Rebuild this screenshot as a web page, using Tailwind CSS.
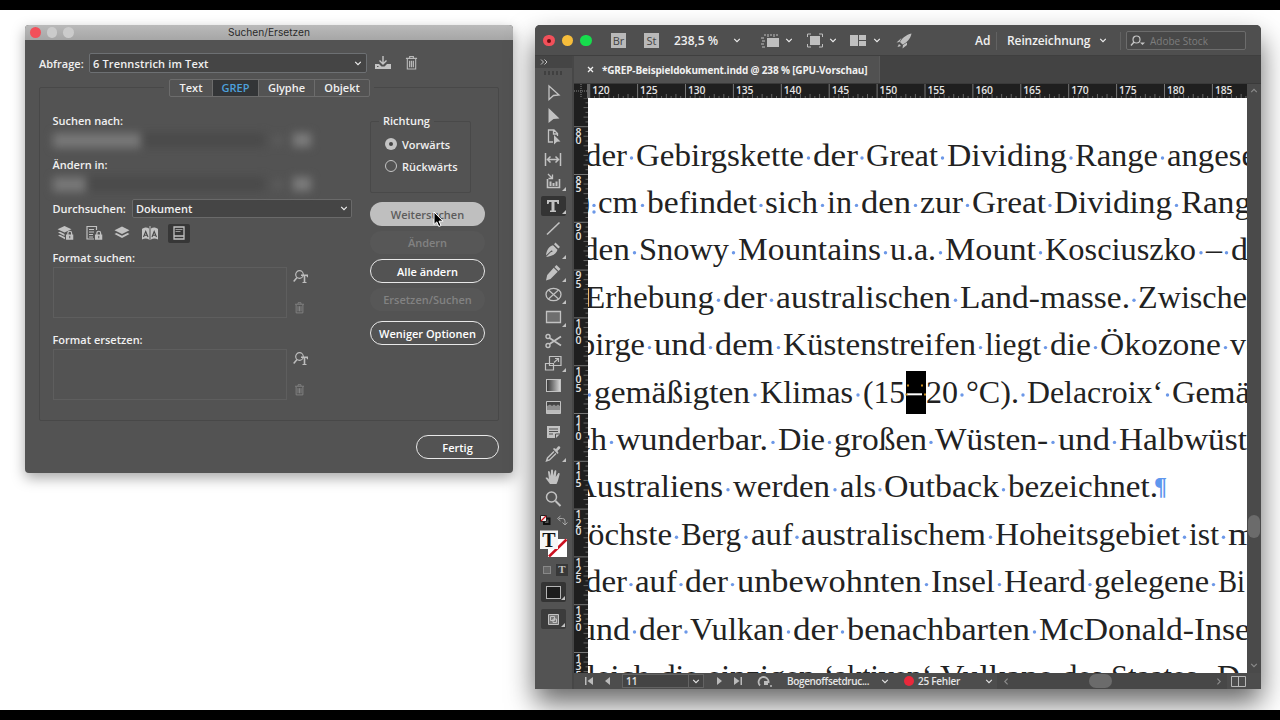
<!DOCTYPE html>
<html lang="de">

<head>
    <meta charset="UTF-8">
    <meta name="viewport" content="width=device-width, initial-scale=1.0">
    <title>Suchen/Ersetzen</title>
    <script src="https://cdn.jsdelivr.net/npm/@tailwindcss/browser@4"></script>
</head>

<body class="relative w-[1280px] h-[720px] overflow-hidden bg-white font-['Open_Sans',sans-serif] text-[11px] leading-none font-semibold text-[#f0f0f0]">

    <!-- Symbole -->
    <svg class="hidden">
        <symbol id="chevron" viewBox="0 0 10 6"><path d="M1.5 1l3.5 3.5L8.5 1" fill="none" stroke="currentColor" stroke-width="1.4" /></symbol>
        <symbol id="trash" viewBox="0 0 14 16"><path d="M1 3h12M5 2.500V1h4v1.500M2.500 3.500v11h9v-11" fill="none" stroke="currentColor" stroke-width="1.200" /><path d="M5 5.500v7M7 5.500v7M9 5.500v7" fill="none" stroke="currentColor" stroke-width="1.300" /></symbol>
        <symbol id="find-format" viewBox="0 0 16 14"><circle cx="6.500" cy="4.500" r="3.800" fill="none" stroke="currentColor" stroke-width="1.200" /><path d="M4 7.500L.7 11.500" stroke="currentColor" stroke-width="1.500" /><path d="M8 4.500h7v2.700h-1l-.5-1.200h-1.200V12h1.200v1H9.500v-1h1.200V6H8z" fill="currentColor" /></symbol>
        <symbol id="lock" viewBox="0 0 8 10"><path d="M2 5V3a2 2 0 0 1 4 0v2" fill="none" stroke="currentColor" stroke-width="1.300" /><path d="M0 4.500h8V10H0z" fill="currentColor" /><path d="M4 6v2.500" stroke="#535353" /></symbol>
        <symbol id="corner" viewBox="0 0 4 4"><path d="M4 0v4H0z" fill="currentColor" /></symbol>
    </svg>

    <div class="absolute inset-x-0 top-0 h-[10px] bg-black z-30"></div>
    <div class="absolute inset-x-0 bottom-0 h-[10px] bg-black z-30"></div>

    <!-- Dialog Suchen/Ersetzen -->
    <section class="absolute left-[25px] top-[25px] w-[488px] h-[448px] flex flex-col rounded-[4px] overflow-hidden bg-[#535353] shadow-[0_5px_14px_rgba(0,0,0,0.35)]">
        <header class="relative shrink-0 h-[15px] flex items-center justify-center bg-linear-to-b from-[#bababa] to-[#a6a6a6] font-['Inter',sans-serif] font-normal text-[10.2px] text-[#2a2a2a]">
            <div class="absolute left-[5px] top-[2px] flex gap-[6px]">
                <i class="size-[10.5px] rounded-full bg-[#f2505a]"></i>
                <i class="size-[10.5px] rounded-full bg-[#cbcbcb]"></i>
                <i class="size-[10.5px] rounded-full bg-[#cbcbcb]"></i>
            </div>
            Suchen/Ersetzen
        </header>

        <div class="mt-[13px] ml-[14px] h-5 shrink-0 flex items-center">
            <span class="w-[50px] whitespace-nowrap">Abfrage:</span>
            <div class="w-[278px] h-5 flex items-center justify-between pl-[3px] pr-1 border border-[#6d7073] rounded-[2px] bg-[#454545]">
                <span class="tracking-[0.14px]">6 Trennstrich im Text</span>
                <svg class="w-[8px] h-[5px]"><use href="#chevron" /></svg>
            </div>
            <svg class="ml-[8px] w-4 h-[14px] text-[#c4c4c4]" viewBox="0 0 16 14"><path d="M8 0v7M4.500 4.500L8 8l3.500-3.500" fill="none" stroke="currentColor" stroke-width="1.400" /><path d="M0 8h4l2.500 2.500h3L12 8h4v5H0z" fill="currentColor" /><path d="M2 10.500h1.500" stroke="#535353" /></svg>
            <svg class="ml-[14px] w-[13px] h-[16px] text-[#b9b9b9]"><use href="#trash" /></svg>
        </div>

        <div class="relative z-10 mt-[6px] ml-[139px] w-[210px] shrink-0 h-[18px] pl-[5px] pr-1 bg-[#535353]">
            <div class="h-full grid grid-cols-[43px_46px_56px_54px] border border-[#6c6c6c] rounded-[2px] divide-x divide-[#6c6c6c] text-center leading-[16px]">
                <span>Text</span>
                <span class="bg-[#333537] text-[#4da0dc]">GREP</span>
                <span>Glyphe</span>
                <span>Objekt</span>
            </div>
        </div>

        <div class="-mt-[10px] mx-[14px] h-[334px] shrink-0 flex pl-[12.5px] pr-[13px] border border-[#484848] rounded-[2px]">
            <div class="w-[299.5px] shrink-0 flex flex-col">
                <label class="mt-[26px] h-[14px] leading-[14px]">Suchen nach:</label>
                <div class="mt-[3px] h-[18px] flex items-center blur-[4px]">
                    <i class="w-[88px] h-[15px] bg-[#777]"></i>
                    <i class="w-[124px] h-[14px] bg-[#4a4a4a]"></i>
                    <i class="ml-[8px] w-[10px] h-[9px] bg-[#5c5c5c]"></i>
                    <i class="ml-[10px] w-[18px] h-[14px] bg-[#7c7c7c]"></i>
                </div>
                <label class="mt-[9px] h-[14px] leading-[14px]">Ändern in:</label>
                <div class="mt-[3px] h-[18px] flex items-center blur-[4px]">
                    <i class="w-[33px] h-[15px] bg-[#777]"></i>
                    <i class="w-[179px] h-[14px] bg-[#4a4a4a]"></i>
                    <i class="ml-[8px] w-[10px] h-[9px] bg-[#5c5c5c]"></i>
                    <i class="ml-[10px] w-[18px] h-[14px] bg-[#7c7c7c]"></i>
                </div>
                <div class="mt-[6px] h-[19px] flex items-center">
                    <span class="w-[79.5px]">Durchsuchen:</span>
                    <div class="flex-1 h-full flex items-center justify-between pl-[3px] pr-[3px] border border-[#6a6a6a] rounded-[2px] bg-[#454545]">
                        <span>Dokument</span>
                        <svg class="w-[8px] h-[5px]"><use href="#chevron" /></svg>
                    </div>
                </div>
                <div class="mt-[5px] h-5 flex items-center text-[#c2c2c2]">
                    <svg class="ml-1 w-[18px] h-[16px]" viewBox="0 0 18 16"><path d="M7.500 1l7 3.200-7 3.300-7-3.300z" fill="currentColor" /><path d="M1 7.500l2-.7 4.500 2.200v2zM1 10.500l2-.7 5 2.400v2z" fill="currentColor" /><use href="#lock" x="9" y="5" width="7.500" height="10" /></svg>
                    <svg class="ml-[11px] w-[18px] h-[16px]" viewBox="0 0 18 16"><path d="M1 1.500h9.500V5M1 1v13h7M3 4.500h5M3 7h5M3 9.500h4M3 12h4" fill="none" stroke="currentColor" stroke-width="1.200" /><use href="#lock" x="9" y="5" width="7.500" height="10" /></svg>
                    <svg class="ml-[9px] w-[18px] h-[16px]" viewBox="0 0 18 16"><path d="M9 1.500l7.500 3.700L9 9 1.500 5.200zM1.500 9l2-1L9 10.800 14.500 8l2 1L9 13z" fill="currentColor" /></svg>
                    <svg class="ml-[10px] w-[18px] h-[16px]" viewBox="0 0 18 16"><path d="M1 4c2.500-2 5-2 7-.5v11c-2-1.200-4.500-1.200-7 0zM10 3.500c2-1.500 4.500-1.500 7 .5v10.500c-2.500-1.200-5-1.200-7 0zM8.500 1h1v14h-1z" fill="currentColor" /><path d="M2.500 12L4.700 6.500 7 12M3.500 10.300h2.500M11 12l2.200-5.500L15.500 12M12 10.300h2.500" fill="none" stroke="#484848" stroke-width="1.100" /></svg>
                    <div class="ml-[9px] w-[22px] h-[19px] grid place-items-center bg-[#373737] rounded-[2px]">
                        <svg class="w-3 h-[14px]" viewBox="0 0 12 14"><path d="M1 1h10v12H1zM1 10h10" fill="none" stroke="currentColor" stroke-width="1.300" /><path d="M2.500 3.500h7M2.500 5.500h5" stroke="#999" /></svg>
                    </div>
                </div>
                <label class="mt-[8px] h-[14px] leading-[14px]">Format suchen:</label>
                <div class="mt-[2px] h-[51px] flex">
                    <div class="w-[234px] border border-[#5e5e5e]"></div>
                    <div class="ml-[6px] flex flex-col items-center pt-[3px] gap-[18px] text-[#bdbdbd]">
                        <svg class="w-4 h-[14px]"><use href="#find-format" /></svg>
                        <svg class="mr-[3px] w-[11px] h-[12px] text-[#858585]"><use href="#trash" /></svg>
                    </div>
                </div>
                <label class="mt-[15px] h-[14px] leading-[14px]">Format ersetzen:</label>
                <div class="mt-[2px] h-[51px] flex">
                    <div class="w-[234px] border border-[#5e5e5e]"></div>
                    <div class="ml-[6px] flex flex-col items-center pt-[3px] gap-[18px] text-[#bdbdbd]">
                        <svg class="w-4 h-[14px]"><use href="#find-format" /></svg>
                        <svg class="mr-[3px] w-[11px] h-[12px] text-[#858585]"><use href="#trash" /></svg>
                    </div>
                </div>
            </div>

            <div class="ml-[18px] w-[115px] shrink-0 flex flex-col text-center">
                <fieldset class="mt-[26px] w-[101px] h-[79px] shrink-0 border border-[#494949] rounded-[2px] text-left">
                    <legend class="ml-[8px] h-[14px] leading-[14px] px-1 bg-[#535353]">Richtung</legend>
                    <div class="mt-[9px] ml-[14px] flex items-center gap-[5px] h-[14px]">
                        <i class="size-[12px] rounded-full bg-[#c4c4c4] grid place-items-center"><i class="size-[4px] rounded-full bg-[#444]"></i></i>
                        Vorwärts
                    </div>
                    <div class="mt-[8px] ml-[14px] flex items-center gap-[5px] h-[14px]">
                        <i class="size-[12px] rounded-full border border-[#c4c4c4]"></i>
                        Rückwärts
                    </div>
                </fieldset>
                <button class="mt-[9px] h-[24px] shrink-0 rounded-full bg-[#bfbfbf] text-[#5c5c5c]">Weitersuchen</button>
                <button class="mt-[5px] h-[23px] shrink-0 rounded-full bg-[#575757] text-[#828282]">Ändern</button>
                <button class="mt-[5px] h-[24px] shrink-0 rounded-full border-[1.5px] border-[#e8e8e8] text-white">Alle ändern</button>
                <button class="mt-[5px] h-[23px] shrink-0 rounded-full bg-[#575757] text-[#828282]">Ersetzen/Suchen</button>
                <button class="mt-[10px] h-[24px] shrink-0 rounded-full border-[1.5px] border-[#e8e8e8] text-white">Weniger Optionen</button>
            </div>
        </div>

        <button class="mt-[14px] mr-[14px] self-end w-[83px] h-[24px] shrink-0 rounded-full border-[1.5px] border-[#e8e8e8] text-white">Fertig</button>
    </section>

    <!-- Dokumentfenster -->
    <section class="absolute left-[535px] top-[25px] w-[726px] h-[664px] flex flex-col rounded-t-[5px] overflow-hidden bg-[#535353] shadow-[0_14px_28px_rgba(0,0,0,0.6)]">
        <header class="h-[31px] shrink-0 flex items-center border-b border-[#3f3f3f] bg-[#4f4f4f] pt-px text-[12px]">
            <div class="ml-[8px] w-[67px] flex gap-[7px]">
                <i class="size-[11.500px] rounded-full bg-[#f2505a] grid place-items-center"><i class="size-[4px] rounded-full bg-[#6b0c10]"></i></i>
                <i class="size-[11.500px] rounded-full bg-[#f6bd3b]"></i>
                <i class="size-[11.500px] rounded-full bg-[#17dd4d]"></i>
            </div>
            <span class="ml-[1px] w-[15px] h-[15px] bg-[#b9b9b9] text-[#444] text-[11px] leading-[15px] text-center font-normal">Br</span>
            <span class="ml-[18px] w-[15px] h-[15px] bg-[#b9b9b9] text-[#444] text-[11px] leading-[15px] text-center font-normal">St</span>
            <span class="ml-[15px] w-[59px] whitespace-nowrap">238,5 %</span>
            <svg class="w-[8px] h-[5px]"><use href="#chevron" /></svg>
            <svg class="ml-[20px] w-[18px] h-[15px] text-[#bfbfbf]" viewBox="0 0 18 15"><path d="M6 5h12v9H6z" fill="currentColor" /><path d="M4 1v2M7 1v3M10 1v2M13 1v3M16 1v2M0 5h3M1 8h3M0 11h3M1 14h3" stroke="currentColor" /></svg>
            <svg class="ml-[6px] w-[8px] h-[5px]"><use href="#chevron" /></svg>
            <svg class="ml-[14px] w-[16px] h-[15px] text-[#bfbfbf]" viewBox="0 0 16 15"><path d="M3 3h10v9H3z" fill="currentColor" /><path d="M.5 4V1H4M12 1h3.500v3M15.500 11v3H12M4 14H.5v-3" fill="none" stroke="currentColor" /></svg>
            <svg class="ml-[6px] w-[8px] h-[5px]"><use href="#chevron" /></svg>
            <svg class="ml-[13px] w-[16px] h-[12px] text-[#bfbfbf]" viewBox="0 0 16 12"><path d="M0 0h8v11H0zM9 0h7v5H9zM9 6h7v5H9z" fill="currentColor" /></svg>
            <svg class="ml-[7px] w-[8px] h-[5px]"><use href="#chevron" /></svg>
            <svg class="ml-[15px] w-[16px] h-[16px] text-[#bfbfbf]" viewBox="0 0 16 16"><path d="M15.500.5C10 2 6.500 4.500 4 9l2.500 2.500C11 9.500 14.500 6 15.500.5zM5.500 5L.5 9.500l3-.5zM11 9.500l-4 2.500-.5 3.500L11 12zM3 11l-1.500 3L5 13z" fill="currentColor" /></svg>
            <span class="ml-[63px] w-[21px]">Ad</span>
            <i class="w-px h-[18px] bg-[#626262]"></i>
            <span class="ml-[10px] w-[92px] tracking-[-0.1px]">Reinzeichnung</span>
            <svg class="w-[8px] h-[5px]"><use href="#chevron" /></svg>
            <i class="ml-[13px] w-px h-[18px] bg-[#626262]"></i>
            <div class="ml-[5px] w-[120px] h-[19px] flex items-center pl-[3px] border border-[#6c6c6c] rounded-[2px] bg-[#484848] text-[10px] font-normal text-[#7d7d7d]">
                <svg class="mr-[4px] w-[16px] h-[12px] text-[#c4c4c4]" viewBox="0 0 16 12"><circle cx="6.500" cy="4.500" r="3.500" fill="none" stroke="currentColor" stroke-width="1.200" /><path d="M4 7L1 10.500" stroke="currentColor" stroke-width="1.400" /><path d="M10 7.500h5l-2.500 2.500z" fill="currentColor" /></svg>
                Adobe Stock
            </div>
        </header>

        <div class="flex-1 flex min-h-0">
            <!-- Werkzeuge -->
            <aside class="w-[39px] shrink-0 flex flex-col border-r-2 border-[#474747] bg-[#535353] text-[#c2c2c2]">
                <div class="h-[12px] shrink-0 pl-[5px] pt-[3px] bg-[#454545]">
                    <svg class="w-[8px] h-[6px]" viewBox="0 0 8 6"><path d="M1 .5L3.500 3 1 5.500M4.500 .5L7 3 4.500 5.500" fill="none" stroke="currentColor" /></svg>
                </div>
                <div class="mt-[3px] ml-[9px] w-[18px] h-[4px] shrink-0 border-y-2 border-dotted border-[#404040]"></div>
                <div id="tools" class="mt-[7px] flex flex-col">
                    <div class="h-[22.55px] flex items-center"><svg class="ml-2 w-5 h-5" viewBox="0 0 20 20"><path d="M6 3l10 9-5.500 .5L6 16.500z" fill="none" stroke="currentColor" stroke-width="1.300" /></svg></div>
                    <div class="h-[22.55px] flex items-center"><svg class="ml-2 w-5 h-5" viewBox="0 0 20 20"><path d="M5.500 2l11 10.500-6 .5-5 4z" fill="currentColor" /></svg></div>
                    <div class="h-[22.55px] flex items-center"><svg class="ml-2 w-5 h-5" viewBox="0 0 20 20"><path d="M10 14H5.500V2h5.500l3.500 3.500V8M10.500 2.500V6h3.500" fill="none" stroke="currentColor" stroke-width="1.300" /><path d="M11 7l6.500 6.500-3.500 .3-3 2.700z" fill="currentColor" /></svg></div>
                    <div class="h-[22.55px] flex items-center"><svg class="ml-2 w-5 h-5" viewBox="0 0 20 20"><path d="M2.500 2v13M17.500 2v13M5 8.500h10M7.500 5.500l-3 3 3 3M12.500 5.500l3 3-3 3" fill="none" stroke="currentColor" stroke-width="1.500" /></svg></div>
                    <div class="h-[22.55px] flex items-center"><svg class="ml-2 w-5 h-5" viewBox="0 0 20 20"><path d="M4.500 6v8.500h12V6" fill="none" stroke="currentColor" stroke-width="1.600" /><path d="M6.500 8.500h2v4.500h-2zM9.500 10h2v3h-2zM12.500 8.500h2v4.500h-2z" fill="currentColor" /><path d="M5 1l4 4M9.500 1.500v4h-4" fill="none" stroke="currentColor" stroke-width="1.300" /></svg><svg class="-ml-px mt-3 w-1 h-1"><use href="#corner" /></svg></div>
                    <div class="h-[22.55px] flex items-center"><div class="ml-[6px] w-[25px] h-5 flex items-center bg-[#343434] rounded-[2px]"><svg class="ml-[2px] w-5 h-5" viewBox="0 0 20 20"><path d="M4 4h12v4h-1.500l-.7-2H11.500v8.500H13V16H7v-1.500h1.500V6H6.200l-.7 2H4z" fill="currentColor" /></svg><svg class="-ml-px mt-3 w-1 h-1"><use href="#corner" /></svg></div></div>
                    <div class="h-[22.55px] flex items-center"><svg class="ml-2 w-5 h-5" viewBox="0 0 20 20"><path d="M4 15.500L16.500 3.500" stroke="currentColor" stroke-width="1.600" /></svg></div>
                    <div class="h-[22.55px] flex items-center"><svg class="ml-2 w-5 h-5" viewBox="0 0 20 20"><path d="M12.500 1.500l4.500 4.500-1.700 1.500-4.300-4.300zM10 4.200l4.500 4.500c-1 4-4.500 6.300-11.500 7.300L8 11c2 .5 2-2 .3-1.500L3 14.500C3.500 9 6 5.200 10 4.200z" fill="currentColor" /></svg><svg class="-ml-px mt-3 w-1 h-1"><use href="#corner" /></svg></div>
                    <div class="h-[22.55px] flex items-center"><svg class="ml-2 w-5 h-5" viewBox="0 0 20 20"><path d="M13.500 1l4 4-2 2-4-4zM10.700 3.800l4 4L7.500 15 3 16.500l1.200-5.500z" fill="currentColor" /></svg><svg class="-ml-px mt-3 w-1 h-1"><use href="#corner" /></svg></div>
                    <div class="h-[22.55px] flex items-center"><svg class="ml-2 w-5 h-5" viewBox="0 0 20 20"><ellipse cx="10.500" cy="8.500" rx="7.500" ry="6.200" fill="none" stroke="currentColor" stroke-width="1.300" /><path d="M5.500 4l10 9M15.500 4l-10 9" stroke="currentColor" stroke-width="1.200" /></svg><svg class="-ml-px mt-3 w-1 h-1"><use href="#corner" /></svg></div>
                    <div class="h-[22.55px] flex items-center"><svg class="ml-2 w-5 h-5" viewBox="0 0 20 20"><path d="M3.500 2.500h14v11h-14z" fill="#6e6e6e" stroke="currentColor" stroke-width="1.300" /></svg><svg class="-ml-px mt-3 w-1 h-1"><use href="#corner" /></svg></div>
                    <div class="h-[22.55px] flex items-center"><svg class="ml-2 w-5 h-5" viewBox="0 0 20 20"><circle cx="5" cy="5.500" r="2" fill="none" stroke="currentColor" stroke-width="1.400" /><circle cx="5" cy="14.500" r="2" fill="none" stroke="currentColor" stroke-width="1.400" /><path d="M6.500 7L18 14.500M6.500 13L18 5.500" stroke="currentColor" stroke-width="1.800" /></svg></div>
                    <div class="h-[22.55px] flex items-center"><svg class="ml-2 w-5 h-5" viewBox="0 0 20 20"><path d="M6.500 2.500H18v9H6.500zM2.500 9.500h8v6.500h-8z" fill="none" stroke="currentColor" stroke-width="1.200" /><path d="M11 8.500l4-3.500M12 4.500h3.500V8" fill="none" stroke="currentColor" stroke-width="1.200" /></svg><svg class="-ml-px mt-3 w-1 h-1"><use href="#corner" /></svg></div>
                    <div class="h-[22.55px] flex items-center"><div class="ml-[11px] -mt-px w-[15px] h-[13px] border border-[#c2c2c2] bg-linear-to-r from-[#3a3a3a] to-[#d5d5d5]"></div></div>
                    <div class="h-[22.55px] flex items-center"><svg class="ml-2 w-5 h-5" viewBox="0 0 20 20"><path d="M3.500 2.500h14v12h-14z" fill="#8e8e8e" stroke="currentColor" /><path d="M4 3h13v4l-2-1.500L13 7l-2-1.500L9 7 7 5.500 4 7z" fill="#444" /><path d="M4 11h13v3H4z" fill="#bbb" /></svg></div>
                    <div class="h-[22.55px] flex items-center"><svg class="ml-2 w-5 h-5" viewBox="0 0 20 20"><path d="M4 5h13v8l-4 4H4z" fill="currentColor" /><path d="M6 8h9M6 10.500h9M6 13h4M12.500 17v-4H17" fill="none" stroke="#505050" /></svg></div>
                    <div class="h-[22.55px] flex items-center"><svg class="ml-2 w-5 h-5" viewBox="0 0 20 20"><path d="M11 7.500L4.500 14l-1 3 3-1L13 9.500" fill="none" stroke="currentColor" stroke-width="1.400" /><path d="M10 5l1-1 2 1 2-2.500c1.500-1 3 .5 2 2L14.500 7l1 2-1 1z" fill="currentColor" /></svg><svg class="-ml-px mt-3 w-1 h-1"><use href="#corner" /></svg></div>
                    <div class="h-[22.55px] flex items-center"><svg class="ml-2 w-5 h-5" viewBox="0 0 20 20"><path d="M7 17c-1.500-2-3-4-4.500-6 1-1 2.300-.3 3.500 1.200L5 5c0-1.200 1.500-1.200 1.800 0l1 4L8 3.500c.2-1.300 1.800-1.300 2 0l.3 5.300L11.500 4c.5-1.200 2-.8 1.800.5L12.800 10l2.200-3.500c.8-1 2-.2 1.600.9C15.500 11 15 14.500 13.500 17z" fill="currentColor" /></svg></div>
                    <div class="h-[22.55px] flex items-center"><svg class="ml-2 w-5 h-5" viewBox="0 0 20 20"><circle cx="8.500" cy="8" r="5" fill="none" stroke="currentColor" stroke-width="1.500" /><path d="M12.500 12l5 5" stroke="currentColor" stroke-width="2" /></svg></div>
                </div>
                <svg class="mt-[4px] ml-[4px] w-[30px] h-[48px] shrink-0" viewBox="0 0 30 48">
                    <path d="M5 4.500h5.500v5.500H5z" fill="none" stroke="#111" stroke-width="2" />
                    <path d="M1.500 1.500h6v6h-6z" fill="#eee" stroke="#222" />
                    <path d="M2 7l5-5" stroke="#d1121b" stroke-width="1.300" />
                    <path d="M20 4.500h3.500q2.500 0 2.500 2.500V10M21.500 2l-3 2.500 3 2.500M23.500 8.500L26 11l2.500-2.500" fill="none" stroke="#a5a5a5" />
                    <path d="M9 25h19v18H9z" fill="#fff" />
                    <path d="M10 42.500L27.500 25.500" stroke="#cc1020" stroke-width="2.500" />
                    <path d="M1 16.500h18v18.500H1z" fill="#f6f6f6" />
                    <text x="10" y="32.500" text-anchor="middle" font-family="Liberation Serif" font-weight="bold" font-size="20" fill="#111">T</text>
                </svg>
                <div class="mt-[2px] ml-[8px] shrink-0 h-[12px] flex items-center gap-[5px]">
                    <i class="size-[8px] border border-[#888] bg-[#666]"></i>
                    <span class="w-[12px] h-[12px] bg-[#383838] font-['Liberation_Serif',serif] font-bold text-[11px] text-center">T</span>
                </div>
                <div class="mt-[6px] ml-[6px] w-[25px] h-5 shrink-0 flex items-center bg-[#343434] rounded-[2px]">
                    <i class="ml-[5px] w-[15px] h-[13px] border border-[#b5b5b5] bg-[#1c1c1c]"></i>
                    <svg class="mt-3 w-1 h-1"><use href="#corner" /></svg>
                </div>
                <div class="mt-[7px] ml-[6px] w-[25px] h-5 shrink-0 flex items-center bg-[#3c3c3c] rounded-[2px]">
                    <svg class="ml-[7px] w-[11px] h-[11px]" viewBox="0 0 11 11"><path d="M.5 .5h10v10H.5z" fill="#777" stroke="currentColor" /><path d="M2.500 2.500h4v4h-4zM5 5h3.500v3.500H5z" fill="none" stroke="currentColor" /></svg>
                    <svg class="ml-[2px] mt-3 w-1 h-1"><use href="#corner" /></svg>
                </div>
            </aside>

            <div class="flex-1 flex flex-col min-w-0">
                <div class="h-[28px] shrink-0 bg-[#434343] border-b border-[#3a3a3a]">
                    <div class="w-[306px] h-full flex items-center bg-[#515151] border-r border-[#5a5a5a] text-[10px] font-bold tracking-[-0.16px] whitespace-nowrap">
                        <svg class="ml-[13px] mr-[8px] w-[7px] h-[7px]" viewBox="0 0 7 7"><path d="M1 1l5 5M6 1L1 6" stroke="currentColor" stroke-width="1.300" /></svg>
                        *GREP-Beispieldokument.indd @ 238 % [GPU-Vorschau]
                    </div>
                </div>
                <div class="flex-1 min-h-0 flex">
                    <div class="w-[673px] shrink-0 flex flex-col">
                        <svg id="ruler-top" class="h-[14px] w-full shrink-0 bg-[#1f1f1f]" viewBox="574 84 673 14"></svg>
                        <div class="flex-1 min-h-0 flex">
                            <svg id="ruler-left" class="w-[14px] h-[575px] shrink-0 bg-[#1f1f1f]" viewBox="574 98 14 575"></svg>
                            <svg id="page" class="w-[659px] h-[575px] bg-white" viewBox="588 98 659 575"></svg>
                        </div>
                    </div>
                    <div class="flex-1 flex flex-col items-center bg-[#4a4a4a] text-[#8c8c8c]">
                        <svg class="mt-[4px] w-[8px] h-[5px] rotate-180"><use href="#chevron" /></svg>
                        <i class="mt-[422px] w-[12px] h-[23px] rounded-full bg-[#6b6b6b]"></i>
                        <svg class="mt-[125px] w-[8px] h-[5px]"><use href="#chevron" /></svg>
                    </div>
                </div>
                <footer class="h-[16px] shrink-0 flex items-center bg-[#4d4d4d] text-[10px] text-[#e6e6e6] whitespace-nowrap">
                    <svg class="ml-[11px] w-[8px] h-[8px] text-[#bbb]" viewBox="0 0 8 8"><path d="M0 0h1.500v8H0zM8 0v8L2.500 4z" fill="currentColor" /></svg>
                    <svg class="ml-[12px] w-[5px] h-[8px] text-[#bbb]" viewBox="0 0 5 8"><path d="M5 0v8L0 4z" fill="currentColor" /></svg>
                    <div class="ml-[12px] w-[82px] h-[14px] flex items-center border border-[#636363] bg-[#444]">
                        <span class="pl-[3px] w-[65px]">11</span>
                        <span class="flex-1 h-full grid place-items-center border-l border-[#636363]"><svg class="w-[8px] h-[5px]"><use href="#chevron" /></svg></span>
                    </div>
                    <svg class="ml-[13px] w-[5px] h-[8px] text-[#bbb]" viewBox="0 0 5 8"><path d="M0 0v8l5-4z" fill="currentColor" /></svg>
                    <svg class="ml-[12px] w-[8px] h-[8px] text-[#bbb]" viewBox="0 0 8 8"><path d="M6.500 0H8v8H6.500zM0 0v8l5.500-4z" fill="currentColor" /></svg>
                    <svg class="ml-[15px] w-[16px] h-[13px] text-[#bbb]" viewBox="0 0 16 13"><path d="M3 10.500A5 5 0 1 1 11.500 8" fill="none" stroke="currentColor" stroke-width="1.800" /><path d="M7 6h4v4H7z" fill="currentColor" /><circle cx="14" cy="11" r="1" fill="currentColor" /></svg>
                    <span class="ml-[14px] w-[94px] tracking-[-0.35px]">Bogenoffsetdruc...</span>
                    <svg class="w-[8px] h-[5px]"><use href="#chevron" /></svg>
                    <i class="ml-[15px] size-[10px] rounded-full bg-[#e9283b]"></i>
                    <span class="ml-[4px] w-[67px] tracking-[-0.25px]">25 Fehler</span>
                    <svg class="w-[8px] h-[5px]"><use href="#chevron" /></svg>
                    <div class="ml-[4px] w-[230px] h-full flex items-center bg-[#474747] text-[#8c8c8c]">
                        <svg class="ml-[5px] w-[8px] h-[5px] rotate-90"><use href="#chevron" /></svg>
                        <i class="ml-[79px] w-[23px] h-[14px] rounded-full bg-[#6b6b6b]"></i>
                        <svg class="ml-[103px] w-[8px] h-[5px] -rotate-90"><use href="#chevron" /></svg>
                    </div>
                    <svg class="ml-[4px] w-[15px] h-[11px] text-[#b8b8b8]" viewBox="0 0 15 11"><path d="M.5 .5h14v10H.5zM7.500 .5v10" fill="none" stroke="currentColor" /></svg>
                </footer>
            </div>
        </div>
    </section>

    <!-- Mauszeiger -->
    <svg class="absolute z-20 left-[433px] top-[211px] w-[11px] h-[17px]" viewBox="0 0 11 17"><path d="M1 1v12.500l2.800-2.600 2 4.600 2.200-1-2-4.300h4z" fill="#000" stroke="#fff" /></svg>

    <script>
        // Zeilen des Dokuments: [Wort, x-Anfang, x-Ende]
        const lines = [
            [['der', 585, 627], ['Gebirgskette', 636, 804], ['der', 813, 858], ['Great', 866, 938], ['Dividing', 947, 1067], ['Range', 1075, 1158], ['angese', 1167, 1256]],
            [[')', 580, 590], ['cm', 598, 638], ['befindet', 647, 757], ['sich', 765, 818], ['in', 827, 852], ['den', 861, 911], ['zur', 920, 963], ['Great', 972, 1046], ['Dividing', 1054, 1172], ['Rang', 1181, 1251]],
            [['den', 582, 630], ['Snowy', 639, 729], ['Mountains', 738, 881], ['u.a.', 890, 936], ['Mount', 945, 1036], ['Kosciuszko', 1045, 1196], ['–', 1206, 1222], ['d', 1231, 1248]],
            [['Erhebung', 585, 714], ['der', 723, 767], ['australischen', 776, 951], ['Land-masse.', 960, 1130], ['Zwische', 1138, 1247]],
            [['birge', 579, 645], ['und', 654, 706], ['dem', 715, 774], ['Küstenstreifen', 783, 976], ['liegt', 985, 1041], ['die', 1050, 1091], ['Ökozone', 1100, 1221], ['vo', 1230, 1262]],
            [['n', 570, 585], ['gemäßigten', 594, 750], ['Klimas', 760, 853], ['(15', 863, 905], ['20', 926, 958], ['°C).', 966, 1019], ['Delacroix‘', 1027, 1163], ['Gemä', 1172, 1250]],
            [['ch', 576, 607], ['wunderbar.', 616, 768], ['Die', 778, 825], ['großen', 834, 927], ['Wüsten-', 935, 1048], ['und', 1058, 1110], ['Halbwüst', 1119, 1247]],
            [['Australiens', 573, 723], ['werden', 733, 830], ['als', 840, 876], ['Outback', 884, 999], ['bezeichnet.', 1008, 1158]],
            [['öchste', 588, 672], ['Berg', 681, 741], ['auf', 751, 793], ['australischem', 801, 986], ['Hoheitsgebiet', 995, 1180], ['ist', 1189, 1219], ['m', 1228, 1257]],
            [['der', 585, 627], ['auf', 635, 677], ['der', 685, 728], ['unbewohnten', 737, 922], ['Insel', 931, 995], ['Heard', 1004, 1086], ['gelegene', 1094, 1209], ['Bi', 1218, 1245]],
            [['und', 579, 630], ['der', 639, 682], ['Vulkan', 690, 784], ['der', 793, 838], ['benachbarten', 847, 1030], ['McDonald-Inse', 1039, 1250]],
            [['leich', 587, 650], ['die', 660, 698], ['einzigen', 707, 815], ['‘aktiven‘', 824, 932], ['Vulkane', 940, 1053], ['des', 1062, 1103], ['Staates.', 1111, 1205], ['D', 1217, 1240]],
        ];

        let page = '';
        lines.forEach((words, row) => {
            const y = 165.5 + row * 47.4;
            words.forEach(([word, x1, x2], i) => {
                page += `<text x="${x1}" y="${y}" textLength="${x2 - x1}" lengthAdjust="spacingAndGlyphs">${word}</text>`;
                const next = words[i + 1];
                // blauer Punkt fuer jedes Leerzeichen
                if (next && word !== '(15') {
                    page += `<circle cx="${(x2 + next[1]) / 2}" cy="${y - 7.5}" r="1.7" fill="#6c98e8" />`;
                }
            });
        });
        page += '<circle cx="594" cy="212" r="1.7" fill="#6c98e8" />';
        page += '<path d="M906 371h20v43h-20z" fill="#000" /><path d="M907 394.300h15" stroke="#fff" stroke-width="2" />';
        page += '<path d="M907 385.500h2M921 385.500h2M905.500 394.500h2M924 394.500h2" stroke="#c58a1e" stroke-width="2" />';
        page += '<text x="1154" y="495" font-size="26" font-weight="bold" textLength="13" lengthAdjust="spacingAndGlyphs" fill="#5f97ee">¶</text>';
        document.getElementById('page').innerHTML = `<g font-family="Liberation Serif, serif" font-weight="400" font-size="32.5" fill="#222">${page}</g>`;

        // Lineale, ein Hauptstrich alle 5 mm
        let rulerTop = '', rulerLeft = '';
        for (let i = 0; i < 14; i++) {
            const x = 589.7 + i * 47.9;
            rulerTop += `<path d="M${x} 84v14" stroke="#777" />`;
            for (let j = 1; j < 10; j++) {
                rulerTop += `<path d="M${x + j * 4.79} 98v-${j % 2 ? 2 : 4}" stroke="#666" />`;
            }
            rulerTop += `<text x="${x + 2.5}" y="94" textLength="17.500">${120 + i * 5}</text>`;
        }
        rulerTop += '<path d="M574 91h14M581 84v14" stroke="#888" stroke-dasharray="1 1" /><path d="M588 84v14" stroke="#aaa" />';
        for (let i = -1; i < 12; i++) {
            const y = 126.7 + i * 47.8;
            rulerLeft += `<path d="M574 ${y}h14" stroke="#777" />`;
            for (let j = 1; j < 10; j++) {
                rulerLeft += `<path d="M588 ${y + j * 4.78}h-${j % 2 ? 2.5 : 4.5}" stroke="#666" />`;
            }
            if (i >= 0) {
                String(80 + i * 5).split('').forEach((digit, k) => {
                    rulerLeft += `<text x="578.500" y="${y + 9 + k * 8.5}" text-anchor="middle">${digit}</text>`;
                });
            }
        }
        const labels = 'font-family="Open Sans, sans-serif" font-size="10.3" font-weight="600" fill="#e4e4e4"';
        document.getElementById('ruler-top').innerHTML = `<g ${labels}>${rulerTop}</g>`;
        document.getElementById('ruler-left').innerHTML = `<g ${labels}>${rulerLeft}</g>`;
    </script>
</body>

</html>
